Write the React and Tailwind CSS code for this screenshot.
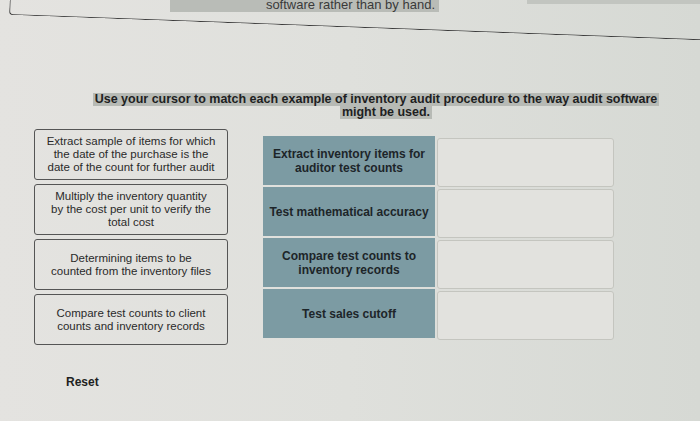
import React from "react";

const examples = [
  ["Extract sample of items for which", "the date of the purchase is the", "date of the count for further audit"],
  ["Multiply the inventory quantity", "by the cost per unit to verify the", "total cost"],
  ["Determining items to be", "counted from the inventory files"],
  ["Compare test counts to client", "counts and inventory records"],
];

const uses = [
  ["Extract inventory items for", "auditor test counts"],
  ["Test mathematical accuracy"],
  ["Compare test counts to", "inventory records"],
  ["Test sales cutoff"],
];

export default function App() {
  return (
    <div
      className="w-[700px] h-[421px] overflow-hidden bg-gradient-to-r from-[#e4e3e0] via-[#dfe0dc] to-[#d6d9d4] text-[#1e1f22]"
      style={{ fontFamily: '"Liberation Sans", Arial, sans-serif' }}
    >
      {/* tail of the previous question panel, seen at a slight tilt */}
      <div className="relative h-[46px]">
        <div className="absolute left-[9px] -top-[12px] w-[720px] h-[29px] origin-bottom-left rotate-[2.1deg] border-l border-b border-[#3c3c3c] rounded-bl-[4px]" />
        <div className="flex -mt-[2px]">
          <span className="ml-[170px] w-[269px] text-right bg-[#b9bcb7] text-[13px] leading-[14px] text-[#3a3a3a] pr-[4px]">
            software rather than by hand.
          </span>
          <span className="ml-[88px] w-[173px] h-[6px] bg-[#c2c5c0]" />
        </div>
      </div>

      <div className="mt-[49px] pl-[52px] flex flex-col items-center text-[12.5px] font-bold leading-[13px] whitespace-nowrap">
        <span className="bg-[#b7bab5] px-[2px]">
          Use your cursor to match each example of inventory audit procedure to the way audit software
        </span>
        <span className="ml-[20px] bg-[#b7bab5] px-[2px]">might be used.</span>
      </div>

      <div className="flex mt-[10px] ml-[34px]">
        <div className="flex flex-col gap-[4px] w-[194px]">
          {examples.map((lines, i) => (
            <div
              key={i}
              className="h-[51px] border border-[#555] rounded-[3px] flex flex-col items-center justify-center text-[11.5px] leading-[13px] text-[#2a2a2a]"
            >
              {lines.map((l, j) => (
                <span key={j} className="whitespace-nowrap">{l}</span>
              ))}
            </div>
          ))}
        </div>

        <div className="ml-[35px] mt-[7px] flex flex-col gap-[2px] w-[172px]">
          {uses.map((lines, i) => (
            <div
              key={i}
              className="h-[49px] bg-[#7c9ba3] flex flex-col items-center justify-center text-[12px] font-bold leading-[14px] text-[#1d2529]"
            >
              {lines.map((l, j) => (
                <span key={j} className="whitespace-nowrap">{l}</span>
              ))}
            </div>
          ))}
        </div>

        <div className="ml-[2px] mt-[9px] flex flex-col gap-[2px] w-[177px]">
          {uses.map((_, i) => (
            <div key={i} className="h-[49px] border border-[#c4c5bf] rounded-[3px] bg-[#e2e2de]" />
          ))}
        </div>
      </div>

      <div className="ml-[66px] mt-[31px] text-[12px] font-bold leading-[12px]">Reset</div>
    </div>
  );
}
